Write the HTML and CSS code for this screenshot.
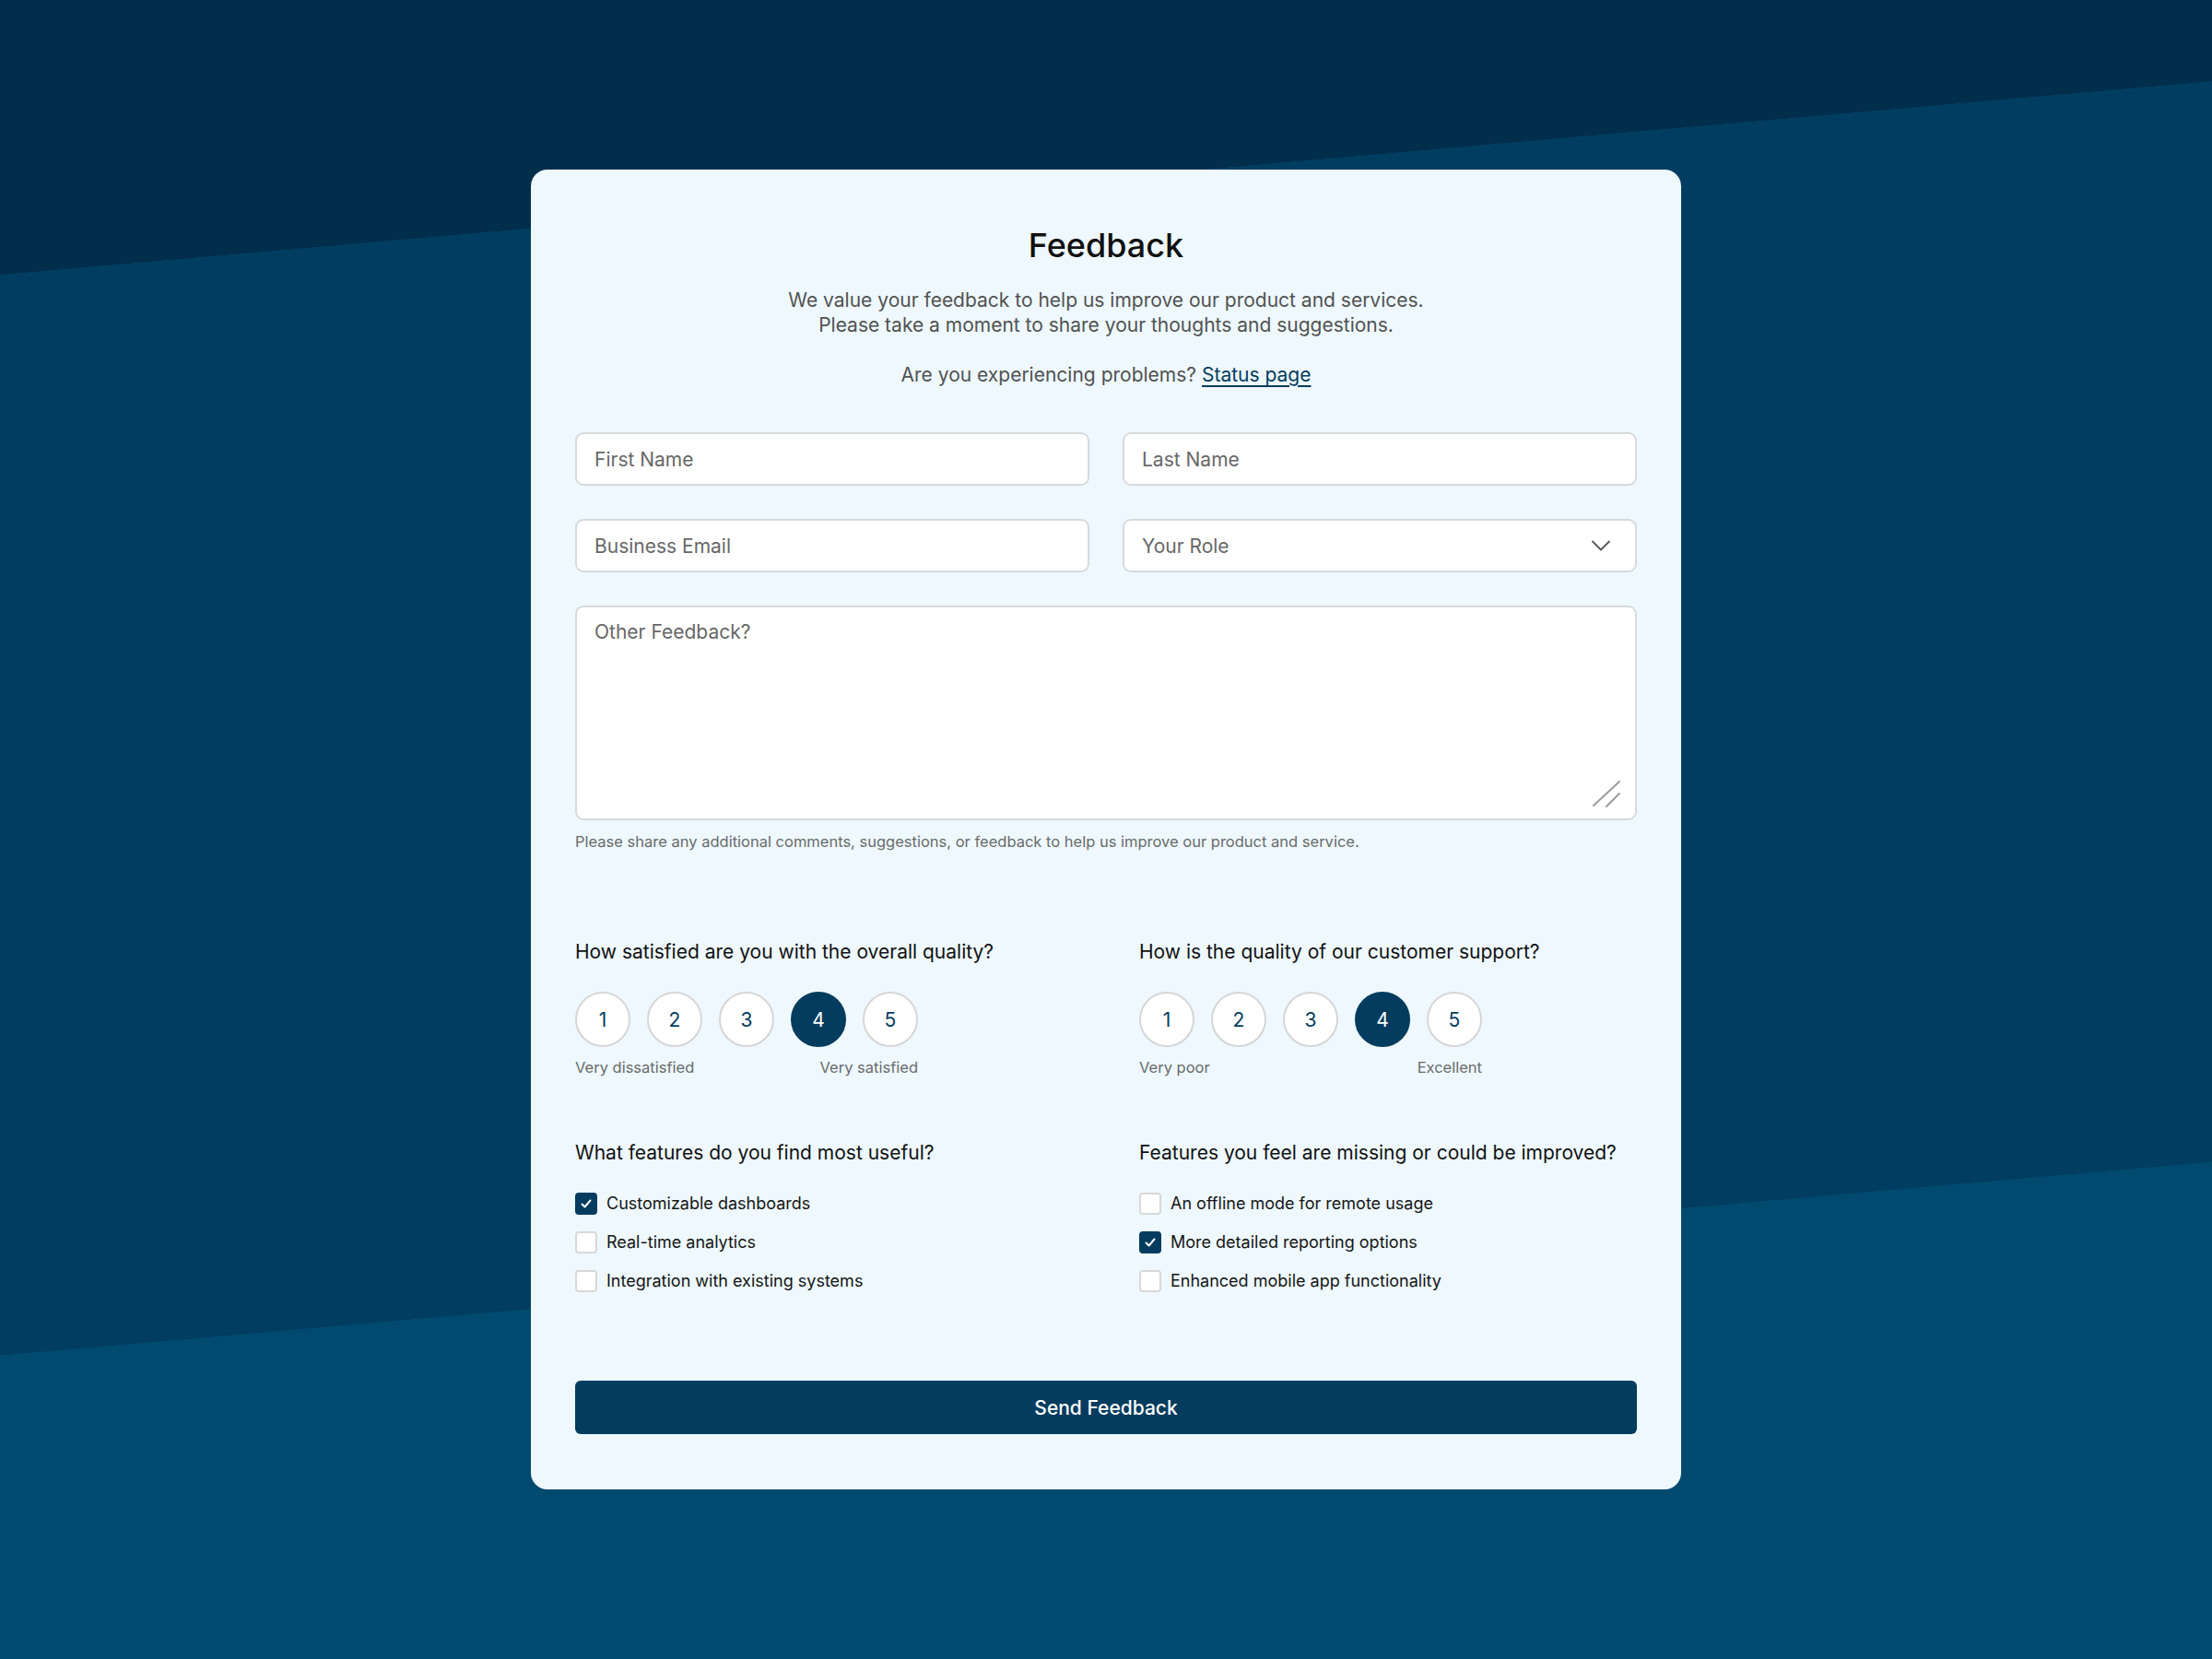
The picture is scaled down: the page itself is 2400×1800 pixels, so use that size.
FILE: index.html
```html
<!DOCTYPE html>
<html lang="en">
<head>
<meta charset="utf-8">
<title>Feedback</title>
<link rel="stylesheet" href="styles.css">
</head>
<body>
<main class="page">
  <form class="card">
    <h1 class="title">Feedback</h1>
    <p class="intro">We value your feedback to help us improve our product and services.<br>Please take a moment to share your thoughts and suggestions.</p>
    <p class="status">Are you experiencing problems? <a href="#">Status page</a></p>

    <div class="fields">
      <input class="field" type="text" placeholder="First Name">
      <input class="field" type="text" placeholder="Last Name">
      <input class="field" type="email" placeholder="Business Email">
      <div class="field select">
        <span>Your Role</span>
        <svg class="chevron" width="20" height="12" viewBox="0 0 20 12"><path d="M1 1.5 L10 10.5 L19 1.5" fill="none" stroke="#555" stroke-width="1.8" stroke-linecap="round" stroke-linejoin="round"/></svg>
      </div>
      <div class="textarea-wrap">
        <textarea class="field textarea" placeholder="Other Feedback?"></textarea>
        <svg class="grip" width="30" height="30" viewBox="0 0 30 30"><path d="M1 28 L29 2 M15 29 L29 15" fill="none" stroke="#9c9c9c" stroke-width="2" stroke-linecap="round"/></svg>
      </div>
    </div>
    <p class="hint">Please share any additional comments, suggestions, or feedback to help us improve our product and service.</p>

    <div class="questions ratings">
      <section class="question">
        <h2>How satisfied are you with the overall quality?</h2>
        <div class="scale">
          <div class="dots">
            <span class="dot">1</span>
            <span class="dot">2</span>
            <span class="dot">3</span>
            <span class="dot on">4</span>
            <span class="dot">5</span>
          </div>
          <div class="scale-labels"><span>Very dissatisfied</span><span>Very satisfied</span></div>
        </div>
      </section>
      <section class="question">
        <h2>How is the quality of our customer support?</h2>
        <div class="scale">
          <div class="dots">
            <span class="dot">1</span>
            <span class="dot">2</span>
            <span class="dot">3</span>
            <span class="dot on">4</span>
            <span class="dot">5</span>
          </div>
          <div class="scale-labels"><span>Very poor</span><span>Excellent</span></div>
        </div>
      </section>
    </div>

    <div class="questions features">
      <section class="question">
        <h2>What features do you find most useful?</h2>
        <ul class="options">
          <li class="option"><span class="box on"><svg width="14" height="14" viewBox="0 0 14 14"><path d="M2.5 7.5 L5.5 10.5 L11.5 3.5" fill="none" stroke="#fff" stroke-width="2" stroke-linecap="round" stroke-linejoin="round"/></svg></span>Customizable dashboards</li>
          <li class="option"><span class="box"></span>Real-time analytics</li>
          <li class="option"><span class="box"></span>Integration with existing systems</li>
        </ul>
      </section>
      <section class="question">
        <h2>Features you feel are missing or could be improved?</h2>
        <ul class="options">
          <li class="option"><span class="box"></span>An offline mode for remote usage</li>
          <li class="option"><span class="box on"><svg width="14" height="14" viewBox="0 0 14 14"><path d="M2.5 7.5 L5.5 10.5 L11.5 3.5" fill="none" stroke="#fff" stroke-width="2" stroke-linecap="round" stroke-linejoin="round"/></svg></span>More detailed reporting options</li>
          <li class="option"><span class="box"></span>Enhanced mobile app functionality</li>
        </ul>
      </section>
    </div>

    <button class="submit" type="button">Send Feedback</button>
  </form>
</main>
</body>
</html>
```

FILE: styles.css
```css
html, body {
  margin: 0;
  padding: 0;
}

body {
  min-height: 100vh;
  font-family: Inter, "Liberation Sans", sans-serif;
  color: #151515;
  background: linear-gradient(175deg, #012f4b 297px, #013d60 297px, #013d60 1465px, #00496f 1465px);
}

.page {
  min-height: 100vh;
  display: flex;
  align-items: center;
  justify-content: center;
}

.card {
  width: 1248px;
  box-sizing: border-box;
  padding: 60px 48px 60px;
  background: #eef8fe;
  border-radius: 18px;
}

.title {
  margin: 0;
  font-size: 36px;
  line-height: 44px;
  font-weight: 500;
  text-align: center;
  color: #111;
}

.intro,
.status {
  margin: 24px 0 0;
  font-size: 21px;
  line-height: 27px;
  color: #525252;
  text-align: center;
}

.status {
  margin-top: 27px;
}

.status a {
  color: #033c5e;
  text-decoration: underline;
  text-underline-offset: 4px;
  text-decoration-thickness: 1.5px;
}

.fields {
  margin-top: 49px;
  display: grid;
  grid-template-columns: 1fr 1fr;
  gap: 36px;
}

.field {
  height: 58px;
  box-sizing: border-box;
  border: 2px solid #d7dadd;
  border-radius: 9px;
  background: #fff;
  padding: 0 19px;
  font-family: Inter, "Liberation Sans", sans-serif;
  font-size: 21px;
  color: #151515;
  outline: none;
  margin: 0;
  width: 100%;
}

.field::placeholder {
  color: #676767;
}

.select {
  display: flex;
  align-items: center;
  justify-content: space-between;
  color: #676767;
  padding-right: 27px;
}

.textarea-wrap {
  grid-column: 1 / -1;
  position: relative;
}

.textarea {
  display: block;
  height: 233px;
  resize: none;
  padding: 13px 19px;
  line-height: 27px;
}

.grip {
  position: absolute;
  right: 18px;
  bottom: 14px;
}

.hint {
  margin: 12px 0 0;
  font-size: 16.5px;
  line-height: 22px;
  color: #6b6b6b;
}

.questions {
  display: grid;
  grid-template-columns: 1fr 1fr;
  column-gap: 72px;
}

.ratings {
  margin-top: 95px;
}

.features {
  margin-top: 68px;
}

.question h2 {
  margin: 0;
  font-size: 21px;
  line-height: 27px;
  font-weight: 400;
  color: #111;
}

.scale {
  display: flex;
  flex-direction: column;
  width: fit-content;
  margin-top: 30px;
}

.dots {
  display: flex;
  gap: 18px;
}

.dot {
  width: 60px;
  height: 60px;
  box-sizing: border-box;
  border-radius: 50%;
  border: 2px solid #d6d6d6;
  background: #fff;
  display: flex;
  align-items: center;
  justify-content: center;
  font-size: 21px;
  color: #033c5e;
}

.dot.on {
  background: #033c5e;
  border-color: #033c5e;
  color: #fff;
}

.scale-labels {
  display: flex;
  justify-content: space-between;
  margin-top: 11px;
  font-size: 16.5px;
  line-height: 22px;
  color: #6b6b6b;
}

.options {
  list-style: none;
  padding: 0;
  margin: 30px 0 0;
  display: flex;
  flex-direction: column;
  gap: 18px;
}

.option {
  display: flex;
  align-items: center;
  gap: 10px;
  font-size: 18px;
  line-height: 24px;
  color: #151515;
}

.box {
  width: 24px;
  height: 24px;
  box-sizing: border-box;
  border: 2px solid #d8d8d8;
  border-radius: 4px;
  background: #fff;
  display: flex;
  align-items: center;
  justify-content: center;
  flex: none;
}

.box.on {
  background: #033c5e;
  border-color: #033c5e;
}

.submit {
  display: block;
  margin-top: 96px;
  width: 100%;
  height: 58px;
  border: 0;
  border-radius: 6px;
  background: #033c5e;
  color: #fff;
  font-family: Inter, "Liberation Sans", sans-serif;
  font-size: 21px;
  font-weight: 500;
  cursor: pointer;
}
```
